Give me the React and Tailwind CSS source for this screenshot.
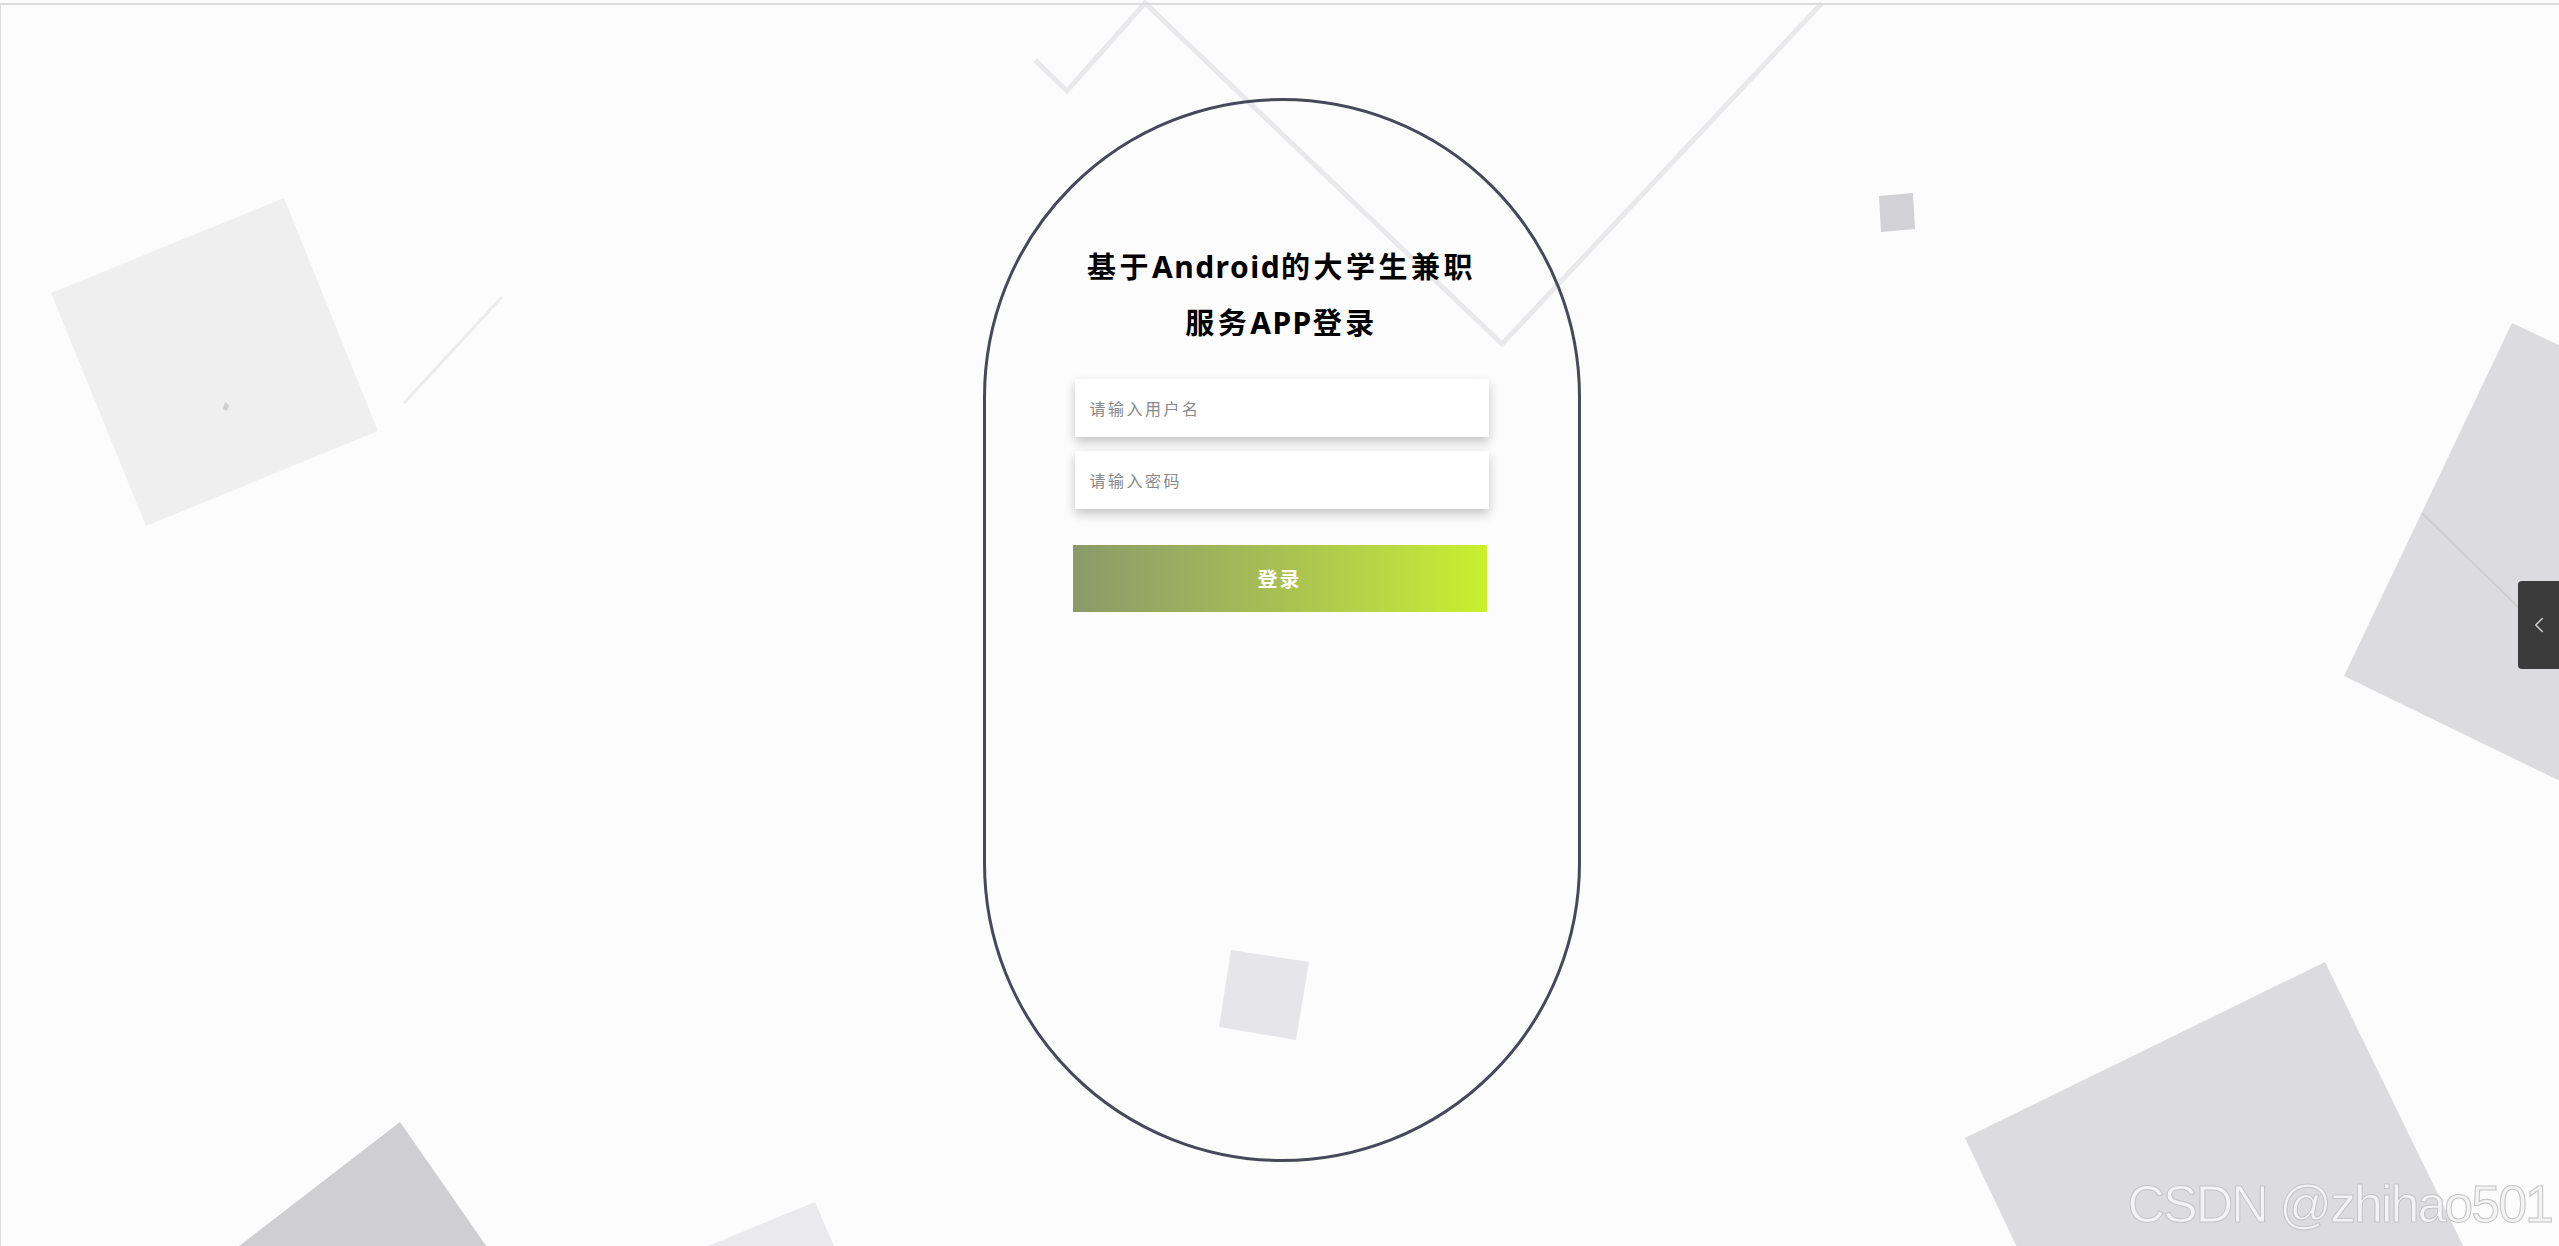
import React from "react";
import { ChevronLeft } from "lucide-react";

function Backdrop() {
  return (
    <svg
      className="absolute inset-0"
      width="2559"
      height="1246"
      viewBox="0 0 2559 1246"
      xmlns="http://www.w3.org/2000/svg"
    >
      {/* left big square */}
      <polygon points="51,293 284,198 378,431 146,526" fill="#efeff0" />
      <polygon points="225,402 229,405 227,411 223,409" fill="#cfcfd1" />
      {/* left thin line */}
      <line x1="405" y1="402" x2="501" y2="298" stroke="#ececee" strokeWidth="3" strokeLinecap="round" />
      {/* top outlines */}
      <polyline
        points="1035,60 1067,91 1145,3 1502,344 1822,3"
        fill="none"
        stroke="#e9e9eb"
        strokeWidth="5"
        strokeLinejoin="miter"
      />
      {/* small square top right */}
      <polygon points="1879,196 1913,193 1915,229 1881,232" fill="#d2d2d4" />
      {/* right big shape */}
      <polygon points="2512,323 2640,383 2640,820 2344,676" fill="#dcdbdd" />
      <line x1="2422" y1="513" x2="2580" y2="668" stroke="#cdcdcf" strokeWidth="2" />
      {/* square below form */}
      <polygon points="1231,950 1309,962 1296,1040 1219,1027" fill="#e6e6e8" />
      {/* bottom left shapes */}
      <polygon points="400,1122 496,1260 221,1260" fill="#cfced0" />
      <polygon points="815,1202 840,1260 674,1260" fill="#eae9eb" />
      {/* bottom right big shape */}
      <polygon points="2325,962 2470,1260 2023,1260 1965,1138" fill="#dcdbdd" />
    </svg>
  );
}

function Latin({ children }) {
  return (
    <span className="font-['Noto_Sans','Noto_Sans_CJK_SC',sans-serif] text-[30px] leading-none tracking-[1.5px]">
      {children}
    </span>
  );
}

export default function App() {
  return (
    <div className="relative h-[1246px] w-full overflow-hidden bg-[#fcfcfd] pt-[3px] font-['Noto_Sans_CJK_SC','Noto_Sans',sans-serif]">
      <Backdrop />
      <div className="relative h-full border-l border-t-2 border-[#dcdcdd]">
        <div className="flex justify-center pt-[93px]">
          <div className="ml-[3px] flex h-[1064px] w-[598px] flex-col items-center rounded-full border-[3px] border-[#474959] pt-[136px]">
            <h1 className="text-center text-[29px] font-bold tracking-[3.5px] text-black">
              <span className="block h-[56px] leading-[56px]">
                基于<Latin>Android</Latin>的大学生兼职
              </span>
              <span className="block h-[56px] leading-[56px]">
                服务<Latin>APP</Latin>登录
              </span>
            </h1>
            <input
              type="text"
              placeholder="请输入用户名"
              className="mt-[30px] h-[58px] w-[414px] bg-white px-[15px] text-[16px] tracking-[2.5px] text-[#333] shadow-[0_5px_10px_rgba(0,0,0,0.22)] outline-none placeholder:text-[#888888]"
            />
            <input
              type="password"
              placeholder="请输入密码"
              className="mt-[14px] h-[58px] w-[414px] bg-white px-[15px] text-[16px] tracking-[2.5px] text-[#333] shadow-[0_5px_10px_rgba(0,0,0,0.22)] outline-none placeholder:text-[#888888]"
            />
            <button
              type="button"
              className="mr-[4px] mt-[36px] h-[67px] w-[414px] bg-linear-to-r from-[#8b9a69] via-[#a8c052] to-[#c9f02a] text-[20px] font-bold tracking-[2px] text-white"
            >
              登录
            </button>
          </div>
        </div>
      </div>

      <div className="absolute right-0 top-[581px] flex h-[88px] w-[41px] items-center justify-center rounded-l-[4px] bg-[#3b3b3b]">
        <ChevronLeft size={26} strokeWidth={1.4} color="#d0d0d0" />
      </div>

      <div className="absolute right-[7px] top-[1178px] font-['Liberation_Sans',Arial,sans-serif] text-[52px] leading-none tracking-[-2px] text-[#f3f3f4] [-webkit-text-stroke:1px_#c4c4c6]">
        CSDN @zhihao501
      </div>
    </div>
  );
}
